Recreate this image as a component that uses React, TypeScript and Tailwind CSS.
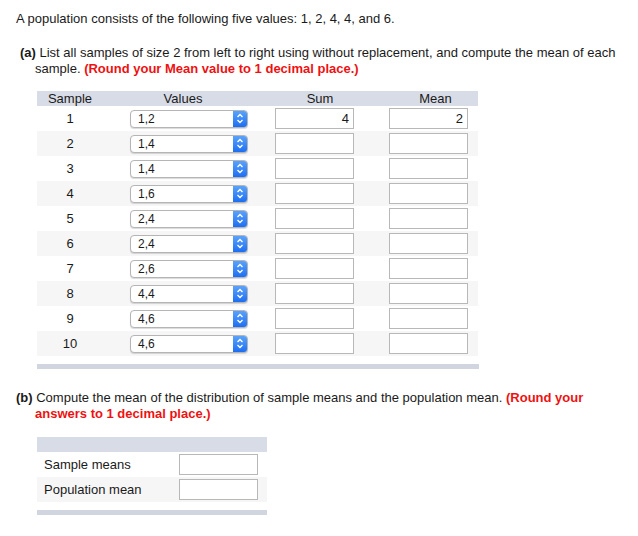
const rows = [
  ['1,2', '4', '2'],
  ['1,4', '', ''],
  ['1,4', '', ''],
  ['1,6', '', ''],
  ['2,4', '', ''],
  ['2,4', '', ''],
  ['2,6', '', ''],
  ['4,4', '', ''],
  ['4,6', '', ''],
  ['4,6', '', ''],
]

function Select({ value }: { value: string }) {
  return (
    <div className="flex h-[18px] w-[118px] items-stretch rounded-[4px] border border-[#b5b5b5] bg-white shadow-[0_1px_1px_rgba(0,0,0,0.15)] overflow-hidden">
      <span className="flex-1 pl-[7px] text-[12px] leading-[16px]">{value}</span>
      <span className="flex w-[14px] items-center justify-center bg-gradient-to-b from-[#5aa2fb] to-[#1c6ef2]">
        <svg width="8" height="11" viewBox="0 0 8 11" fill="none" stroke="white" strokeWidth="1.4">
          <path d="M1.5 4 L4 1.5 L6.5 4" />
          <path d="M1.5 7 L4 9.5 L6.5 7" />
        </svg>
      </span>
    </div>
  )
}

function Box({ value = '' }: { value?: string }) {
  return (
    <div className="h-[21px] w-[79px] border border-[#b8b8b8] bg-white px-[4px] text-right text-[13px] leading-[19px]">
      {value}
    </div>
  )
}

export default function App() {
  return (
    <div className="h-[536px] w-[638px] bg-white text-[13px] text-[#1a1a1a]" style={{ fontFamily: '"Liberation Sans", Arial, sans-serif' }}>
      <p className="pl-[16px] pt-[11px] leading-[16px]">A population consists of the following five values: 1, 2, 4, 4, and 6.</p>
      <div className="mt-[18px] pl-[20px] pr-4 leading-[16px]">
        <span className="font-bold">(a)</span> List all samples of size 2 from left to right using without replacement, and compute the mean of each
        <br />
        <span className="pl-[15px]">sample. </span>
        <span className="font-bold text-[#ee1111]">(Round your Mean value to 1 decimal place.)</span>
      </div>

      <div className="ml-[37px] mt-[14px] w-[441px]">
        <div className="grid h-[15px] grid-cols-[66px_150px_120px_105px] bg-[#d8dce6] text-center leading-[15px]">
          <span>Sample</span>
          <span className="pl-[10px]">Values</span>
          <span className="pl-[14px]">Sum</span>
          <span className="pl-[20px]">Mean</span>
        </div>
        {rows.map((r, i) => (
          <div key={i} className={`flex h-[25px] items-center ${i % 2 ? 'bg-[#f6f6f6]' : 'bg-white'}`}>
            <span className="w-[66px] text-center">{i + 1}</span>
            <span className="ml-[27px]"><Select value={r[0]} /></span>
            <span className="ml-[27px]"><Box value={r[1]} /></span>
            <span className="ml-[35px]"><Box value={r[2]} /></span>
          </div>
        ))}
        <div className="mt-[8px] h-[5px] w-[442px] bg-[#d0d5df]" />
      </div>

      <div className="mt-[21px] pl-[16px] pr-4 leading-[16px]">
        <span className="font-bold">(b)</span> Compute the mean of the distribution of sample means and the population mean.{' '}
        <span className="font-bold text-[#ee1111]">(Round your</span>
        <br />
        <span className="pl-[19px] font-bold text-[#ee1111]">answers to 1 decimal place.)</span>
      </div>

      <div className="ml-[37px] mt-[15px] w-[230px]">
        <div className="h-[15px] bg-[#d8dce6]" />
        {['Sample means', 'Population mean'].map((t, i) => (
          <div key={t} className={`flex h-[25px] items-center ${i % 2 ? 'bg-[#f6f6f6]' : 'bg-white'}`}>
            <span className="w-[142px] pl-[7px]">{t}</span>
            <Box />
          </div>
        ))}
        <div className="mt-[8px] h-[5px] bg-[#d0d5df]" />
      </div>
    </div>
  )
}
